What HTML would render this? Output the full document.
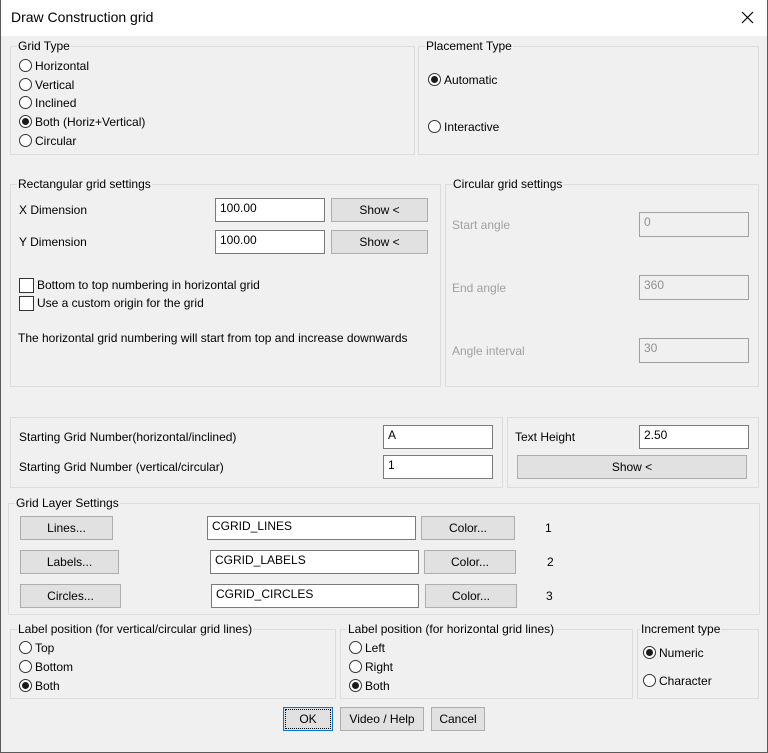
<!DOCTYPE html>
<html><head><meta charset="utf-8"><style>
*{box-sizing:border-box;margin:0;padding:0}
body{width:768px;height:753px;overflow:hidden;background:#f0f0f0;font-family:"Liberation Sans",sans-serif;font-size:12px;color:#000;position:relative}
.win{position:absolute;left:0;top:0;width:768px;height:753px;border:1px solid #5a5a5a;border-top:none}
.title{position:absolute;left:0;top:0;width:768px;height:36px;background:#fff;border-left:1px solid #5a5a5a;border-right:1px solid #5a5a5a}
.title span{position:absolute;left:10px;top:9px;font-size:14px}
.x{position:absolute;left:740px;top:11px}
.g{position:absolute;border:1px solid #dcdcdc}
.gl{position:absolute;background:#f0f0f0;padding:0 1px;white-space:nowrap}
.t{position:absolute;white-space:nowrap}
.dis{color:#a0a0a0}
.r{position:absolute;white-space:nowrap;padding-left:16px;height:16px;line-height:16px}
.r:before{content:"";position:absolute;left:0;top:1px;width:13px;height:13px;border:1px solid #333;border-radius:50%;background:#fff;box-sizing:border-box}
.r.on:after{content:"";position:absolute;left:3px;top:4px;width:7px;height:7px;border-radius:50%;background:#1a1a1a}
.c{position:absolute;white-space:nowrap;padding-left:18px;height:16px;line-height:16px}
.c:before{content:"";position:absolute;left:0;top:1px;width:13px;height:13px;border:1px solid #333;background:#fff}
.in{position:absolute;background:#fff;border:1px solid #7a7a7a;padding:2px 4px;line-height:14px}
.in.d{background:#f0f0f0;border-color:#a0a0a0;color:#909090}
.b{position:absolute;background:#e1e1e1;border:1px solid #adadad;text-align:center}
</style></head><body>
<div class="win"></div>
<div class="title"><span>Draw Construction grid</span><svg class="x" width="13" height="13" viewBox="0 0 13 13"><path d="M1 1L12 12M12 1L1 12" stroke="#000" stroke-width="1.2" fill="none"/></svg></div>

<div class="g" style="left:10px;top:46px;width:405px;height:109px"></div>
<div class="gl" style="left:17px;top:39px">Grid Type</div>
<div class="r" style="left:19px;top:58px">Horizontal</div>
<div class="r" style="left:19px;top:77px">Vertical</div>
<div class="r" style="left:19px;top:95px">Inclined</div>
<div class="r on" style="left:19px;top:114px">Both (Horiz+Vertical)</div>
<div class="r" style="left:19px;top:133px">Circular</div>

<div class="g" style="left:418px;top:46px;width:341px;height:109px"></div>
<div class="gl" style="left:425px;top:39px">Placement Type</div>
<div class="r on" style="left:428px;top:72px">Automatic</div>
<div class="r" style="left:428px;top:119px">Interactive</div>

<div class="g" style="left:10px;top:184px;width:431px;height:203px"></div>
<div class="gl" style="left:17px;top:177px">Rectangular grid settings</div>
<div class="t" style="left:19px;top:203px">X Dimension</div>
<div class="in" style="left:215px;top:198px;width:110px;height:24px">100.00</div>
<div class="b" style="left:331px;top:198px;width:97px;height:24px;line-height:22px">Show &lt;</div>
<div class="t" style="left:19px;top:235px">Y Dimension</div>
<div class="in" style="left:215px;top:230px;width:110px;height:24px">100.00</div>
<div class="b" style="left:331px;top:230px;width:97px;height:24px;line-height:22px">Show &lt;</div>
<div class="c" style="left:19px;top:277px">Bottom to top numbering in horizontal grid</div>
<div class="c" style="left:19px;top:295px">Use a custom origin for the grid</div>
<div class="t" style="left:18px;top:331px">The horizontal grid numbering will start from top and increase downwards</div>

<div class="g" style="left:445px;top:184px;width:314px;height:203px"></div>
<div class="gl" style="left:452px;top:177px">Circular grid settings</div>
<div class="t dis" style="left:452px;top:218px">Start angle</div>
<div class="in d" style="left:639px;top:212px;width:110px;height:25px">0</div>
<div class="t dis" style="left:452px;top:281px">End angle</div>
<div class="in d" style="left:639px;top:275px;width:110px;height:25px">360</div>
<div class="t dis" style="left:452px;top:344px">Angle interval</div>
<div class="in d" style="left:639px;top:338px;width:110px;height:25px">30</div>

<div class="g" style="left:10px;top:417px;width:493px;height:71px"></div>
<div class="t" style="left:19px;top:430px">Starting Grid Number(horizontal/inclined)</div>
<div class="in" style="left:383px;top:425px;width:110px;height:24px">A</div>
<div class="t" style="left:19px;top:460px">Starting Grid Number (vertical/circular)</div>
<div class="in" style="left:383px;top:455px;width:110px;height:24px">1</div>

<div class="g" style="left:507px;top:417px;width:252px;height:71px"></div>
<div class="t" style="left:515px;top:430px">Text Height</div>
<div class="in" style="left:639px;top:425px;width:110px;height:24px">2.50</div>
<div class="b" style="left:517px;top:455px;width:230px;height:24px;line-height:22px">Show &lt;</div>

<div class="g" style="left:8px;top:503px;width:752px;height:112px"></div>
<div class="gl" style="left:15px;top:496px">Grid Layer Settings</div>
<div class="b" style="left:20px;top:516px;width:93px;height:24px;line-height:22px">Lines...</div>
<div class="in" style="left:207px;top:516px;width:209px;height:24px">CGRID_LINES</div>
<div class="b" style="left:421px;top:516px;width:94px;height:24px;line-height:22px">Color...</div>
<div class="t" style="left:545px;top:521px">1</div>
<div class="b" style="left:20px;top:550px;width:99px;height:24px;line-height:22px">Labels...</div>
<div class="in" style="left:210px;top:550px;width:209px;height:24px">CGRID_LABELS</div>
<div class="b" style="left:424px;top:550px;width:92px;height:24px;line-height:22px">Color...</div>
<div class="t" style="left:547px;top:555px">2</div>
<div class="b" style="left:20px;top:584px;width:101px;height:24px;line-height:22px">Circles...</div>
<div class="in" style="left:211px;top:584px;width:208px;height:24px">CGRID_CIRCLES</div>
<div class="b" style="left:425px;top:584px;width:92px;height:24px;line-height:22px">Color...</div>
<div class="t" style="left:546px;top:589px">3</div>

<div class="g" style="left:10px;top:629px;width:326px;height:70px"></div>
<div class="gl" style="left:17px;top:622px">Label position (for vertical/circular grid lines)</div>
<div class="r" style="left:19px;top:640px">Top</div>
<div class="r" style="left:19px;top:659px">Bottom</div>
<div class="r on" style="left:19px;top:678px">Both</div>

<div class="g" style="left:340px;top:629px;width:293px;height:70px"></div>
<div class="gl" style="left:347px;top:622px">Label position (for horizontal grid lines)</div>
<div class="r" style="left:349px;top:640px">Left</div>
<div class="r" style="left:349px;top:659px">Right</div>
<div class="r on" style="left:349px;top:678px">Both</div>

<div class="g" style="left:637px;top:629px;width:122px;height:70px"></div>
<div class="gl" style="left:640px;top:622px">Increment type</div>
<div class="r on" style="left:643px;top:645px">Numeric</div>
<div class="r" style="left:643px;top:673px">Character</div>

<div class="b" style="left:283px;top:707px;width:50px;height:24px;line-height:22px;border:1px solid #0078d7;background:#e1e1e1"><div style="position:absolute;left:1px;top:1px;right:1px;bottom:1px;border:1px dotted #000"></div>OK</div>
<div class="b" style="left:340px;top:707px;width:84px;height:24px;line-height:22px">Video / Help</div>
<div class="b" style="left:431px;top:707px;width:54px;height:24px;line-height:22px">Cancel</div>
</body></html>
